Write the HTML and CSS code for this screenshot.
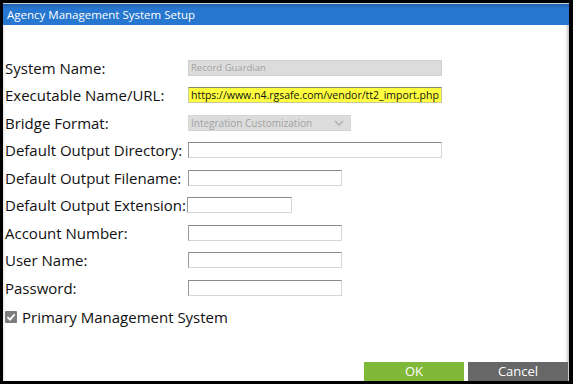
FILE: index.html
```html
<!DOCTYPE html>
<html lang="en">
<head>
    <meta charset="UTF-8">
    <title>Agency Management System Setup</title>
    <link rel="stylesheet" href="styles.css">
</head>
<body>
    <div class="dialog">
        <div class="titlebar">Agency Management System Setup</div>
        <div class="content">
            <div class="form">
                <div class="row">
                    <label>System Name:</label>
                    <div class="field wide disabled name">Record Guardian</div>
                </div>
                <div class="row">
                    <label>Executable Name/URL:</label>
                    <div class="field wide highlight">https://www.n4.rgsafe.com/vendor/tt2_import.php</div>
                </div>
                <div class="row">
                    <label>Bridge Format:</label>
                    <div class="field select disabled">
                        <span>Integration Customization</span>
                        <svg class="chevron" width="10" height="6" viewBox="0 0 10 6"><path d="M1 1 L5 5 L9 1" fill="none" stroke="#b0b0b0" stroke-width="1.5"/></svg>
                    </div>
                </div>
                <div class="row">
                    <label>Default Output Directory:</label>
                    <div class="field wide"></div>
                </div>
                <div class="row">
                    <label>Default Output Filename:</label>
                    <div class="field medium"></div>
                </div>
                <div class="row">
                    <label class="tight">Default Output Extension:</label>
                    <div class="field short"></div>
                </div>
                <div class="row">
                    <label>Account Number:</label>
                    <div class="field medium"></div>
                </div>
                <div class="row">
                    <label>User Name:</label>
                    <div class="field medium"></div>
                </div>
                <div class="row">
                    <label>Password:</label>
                    <div class="field medium"></div>
                </div>
                <div class="check-row">
                    <svg class="checkbox" width="12" height="12" viewBox="0 0 12 12">
                        <rect x="0" y="0" width="12" height="12" rx="1" fill="#7d7d7d"/>
                        <path d="M2.5 6.2 L5 8.7 L9.6 3.4" fill="none" stroke="#fff" stroke-width="1.8"/>
                    </svg>
                    <span>Primary Management System</span>
                </div>
            </div>
            <div class="buttons">
                <button class="btn ok">OK</button>
                <button class="btn cancel">Cancel</button>
            </div>
        </div>
    </div>
</body>
</html>
```

FILE: styles.css
```css
body {
    margin: 0;
    background-color: #000;
    width: 573px;
    height: 384px;
    overflow: hidden;
}

.dialog {
    margin: 3px 0 0 3px;
    width: 566px;
    height: 378px;
    background-color: #fff;
    border-top: 1px solid #d0d0d0;
    box-sizing: border-box;
    display: flex;
    flex-direction: column;
    box-shadow: inset -4px 0 3px -2px #c8c8c8, inset 3px 0 3px -2px #e0e0e0;
}

.titlebar {
    height: 21px;
    background: linear-gradient(#1f5fae 0, #2776cf 4px, #2777d0 100%);
    color: #fff;
    font-family: "Open Sans", sans-serif;
    font-size: 11.5px;
    line-height: 21px;
    padding-left: 4px;
}

.content {
    flex: 1;
    display: flex;
    flex-direction: column;
    justify-content: space-between;
}

.form {
    padding: 29px 0 0 2px;
    font-family: "Open Sans", sans-serif;
    font-size: 15px;
    color: #111;
}

.row {
    display: flex;
    align-items: center;
    height: 27.5px;
}

.row label {
    width: 183px;
    flex-shrink: 0;
    white-space: nowrap;
}

.row label.tight {
    width: 182px;
}

.field {
    height: 16px;
    box-sizing: border-box;
    border: 1px solid #d6d6d6;
    border-top-color: #8a8a8a;
    border-left-color: #9a9a9a;
    background-color: #fff;
    font-family: "Open Sans", sans-serif;
    font-size: 10px;
    line-height: 14px;
    padding-left: 2px;
    white-space: nowrap;
    overflow: hidden;
}

.wide {
    width: 254px;
}

.medium {
    width: 154px;
}

.short {
    width: 105px;
}

.disabled {
    background-color: #dcdcdc;
    color: #a2a2a2;
    border-color: #d0d0d0;
}

.name {
    font-size: 9.5px;
}

.highlight {
    background-color: #ffff40;
    color: #111;
    font-size: 10.5px;
    border-color: #c8c8a0;
    border-top-color: #8a8a6a;
}

.select {
    width: 163px;
    display: flex;
    align-items: center;
    justify-content: space-between;
    padding-right: 6px;
    border-color: #d4d4d4;
}

.chevron {
    flex-shrink: 0;
}

.check-row {
    display: flex;
    align-items: center;
    gap: 5px;
    height: 30px;
}

.buttons {
    display: flex;
    justify-content: flex-end;
    gap: 4px;
    padding-right: 1px;
}

.btn {
    width: 100px;
    height: 19px;
    border: none;
    color: #fff;
    font-family: "Open Sans", sans-serif;
    font-size: 13px;
    line-height: 19px;
    padding: 0;
}

.ok {
    background-color: #80b838;
}

.cancel {
    background-color: #676767;
}
```
